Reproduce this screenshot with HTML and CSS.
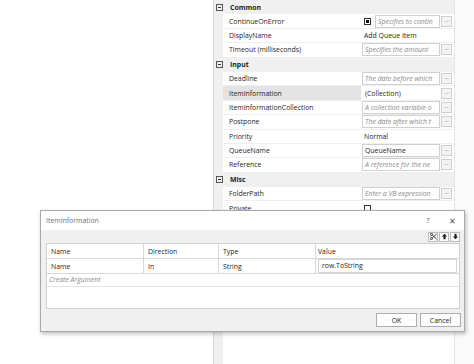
FILE: index.html
```html
<!DOCTYPE html>
<html lang="en">
<head>
    <meta charset="UTF-8">
    <title>Properties - Add Queue Item</title>
    <link rel="stylesheet" href="styles.css">
</head>
<body>
    <div class="screen">
        <div class="canvas"></div>
        <div class="panel">
            <div class="category"><span class="toggle"></span>Common</div>
            <div class="prop">
                <div class="name">ContinueOnError</div>
                <div class="value"><span class="check checked"></span><span class="box hint">Specifies to contin</span><span class="dots">...</span></div>
            </div>
            <div class="prop">
                <div class="name">DisplayName</div>
                <div class="value plain">Add Queue Item</div>
            </div>
            <div class="prop">
                <div class="name">Timeout (milliseconds)</div>
                <div class="value"><span class="box hint">Specifies the amount</span><span class="dots">...</span></div>
            </div>
            <div class="category"><span class="toggle"></span>Input</div>
            <div class="prop">
                <div class="name">Deadline</div>
                <div class="value"><span class="box hint">The date before which</span><span class="dots">...</span></div>
            </div>
            <div class="prop selected">
                <div class="name">ItemInformation</div>
                <div class="value"><span class="box flat">(Collection)</span><span class="dots">...</span></div>
            </div>
            <div class="prop">
                <div class="name">ItemInformationCollection</div>
                <div class="value"><span class="box hint">A collection variable o</span><span class="dots">...</span></div>
            </div>
            <div class="prop">
                <div class="name">Postpone</div>
                <div class="value"><span class="box hint">The date after which t</span><span class="dots">...</span></div>
            </div>
            <div class="prop">
                <div class="name">Priority</div>
                <div class="value plain">Normal</div>
            </div>
            <div class="prop">
                <div class="name">QueueName</div>
                <div class="value"><span class="box">QueueName</span><span class="dots">...</span></div>
            </div>
            <div class="prop">
                <div class="name">Reference</div>
                <div class="value"><span class="box hint">A reference for the ne</span><span class="dots">...</span></div>
            </div>
            <div class="category"><span class="toggle"></span>Misc</div>
            <div class="prop">
                <div class="name">FolderPath</div>
                <div class="value"><span class="box hint">Enter a VB expression</span><span class="dots">...</span></div>
            </div>
            <div class="prop">
                <div class="name">Private</div>
                <div class="value"><span class="check"></span></div>
            </div>
        </div>
        <div class="side"></div>

        <div class="dialog">
            <div class="dialog-title">
                <span class="title-text">ItemInformation</span>
                <span class="title-btn">?</span>
                <span class="title-btn close">&#x2715;</span>
            </div>
            <div class="dialog-body">
                <div class="toolbar">
                    <span class="tool">
                        <svg width="7" height="7" viewBox="0 0 8 8"><circle cx="1.6" cy="1.6" r="1.2" fill="none" stroke="#222" stroke-width="1"/><circle cx="1.6" cy="6.4" r="1.2" fill="none" stroke="#222" stroke-width="1"/><path d="M2.6 2.4L7.5 6.8M2.6 5.6L7.5 1.2" stroke="#222" stroke-width="1"/></svg>
                    </span>
                    <span class="tool">
                        <svg width="7" height="7" viewBox="0 0 8 8"><path d="M4 0.8L7 4H5.2V7.2H2.8V4H1Z" fill="#222"/></svg>
                    </span>
                    <span class="tool">
                        <svg width="7" height="7" viewBox="0 0 8 8"><path d="M4 7.2L7 4H5.2V0.8H2.8V4H1Z" fill="#222"/></svg>
                    </span>
                </div>
                <div class="grid">
                    <div class="grid-row head">
                        <div class="cell c-name">Name</div>
                        <div class="cell c-dir">Direction</div>
                        <div class="cell c-type">Type</div>
                        <div class="cell c-value">Value</div>
                    </div>
                    <div class="grid-row">
                        <div class="cell c-name">Name</div>
                        <div class="cell c-dir">In</div>
                        <div class="cell c-type">String</div>
                        <div class="cell c-value"><span class="value-box">row.ToString</span></div>
                    </div>
                    <div class="create">Create Argument</div>
                </div>
            </div>
            <div class="dialog-footer">
                <button class="btn">OK</button>
                <button class="btn">Cancel</button>
            </div>
        </div>
    </div>
</body>
</html>
```

FILE: styles.css
```css
body {
    margin: 0;
    font-family: "Open Sans", "Noto Sans", sans-serif;
    font-size: 6.9px;
    color: #1e1e1e;
    background: #fff;
}

.screen {
    position: relative;
    width: 474px;
    height: 364px;
    overflow: hidden;
    display: flex;
}

.canvas {
    width: 213px;
    background: #fff;
}

.panel {
    width: 240px;
    height: 364px;
    background: #fff;
    border-left: 1px solid #dcdcdc;
    box-shadow: inset 9px 0 0 #f0f0f0;
    overflow: hidden;
}

.side {
    flex: 1;
    background: #fafafa;
    border-left: 1px solid #e4e4e4;
}

/* property grid */
.category {
    height: 14.4px;
    display: flex;
    align-items: center;
    background: #f0f0f0;
    font-weight: bold;
    box-sizing: border-box;
}

.toggle {
    width: 5px;
    height: 5px;
    border: 1px solid #555;
    margin: 0 7px 0 2px;
    position: relative;
}

.toggle::after {
    content: "";
    position: absolute;
    left: 1px;
    right: 1px;
    top: 2px;
    height: 1px;
    background: #333;
}

.prop {
    height: 14.4px;
    display: flex;
    margin-left: 9px;
    box-sizing: border-box;
}

.prop .name {
    width: 138px;
    padding-left: 6px;
    display: flex;
    align-items: center;
    border-bottom: 1px solid #efefef;
    box-sizing: border-box;
}

.prop.selected .name {
    background: #e3e3e3;
}

.prop .value {
    flex: 1;
    display: flex;
    align-items: center;
    gap: 1px;
    padding: 0 2px 0 1px;
    border-bottom: 1px solid #efefef;
    min-width: 0;
}

.prop .value.plain {
    padding-left: 3px;
}

.box {
    flex: 1;
    width: 0;
    min-width: 0;
    height: 11px;
    line-height: 11px;
    border: 1px solid #d0d0d0;
    background: #fff;
    padding-left: 2px;
    white-space: nowrap;
    overflow: hidden;
}

.box.flat {
    border-color: transparent;
}

.hint {
    color: #8a8a8a;
    font-style: italic;
}

.dots {
    flex: none;
    width: 9px;
    height: 9px;
    line-height: 7px;
    overflow: hidden;
    border: 1px solid #cfcfcf;
    background: #f4f4f4;
    text-align: center;
    color: #555;
    font-size: 5.5px;
}

.check {
    width: 7px;
    height: 7px;
    border: 1px solid #333;
    background: #fff;
    margin: 0 3px 0 2px;
    box-sizing: border-box;
    flex: none;
}

.check.checked {
    border-color: #333;
    background: #111;
    box-shadow: inset 0 0 0 1px #fff;
}

/* dialog */
.dialog {
    position: absolute;
    left: 40px;
    top: 210px;
    width: 423px;
    border: 1px solid #a8a8a8;
    background: #f0f0f0;
    box-shadow: 1px 2px 4px rgba(0, 0, 0, 0.25);
}

.dialog-title {
    height: 19px;
    background: #fff;
    display: flex;
    align-items: center;
    padding-left: 5px;
}

.title-text {
    flex: 1;
    color: #707070;
}

.title-btn {
    width: 24px;
    text-align: center;
    color: #555;
    font-size: 7px;
}

.title-btn.close {
    font-size: 8px;
    margin-right: 0;
}

.dialog-body {
    padding: 0 4px 0 5px;
}

.toolbar {
    height: 13px;
    display: flex;
    justify-content: flex-end;
    align-items: center;
    gap: 1px;
}

.tool {
    width: 8px;
    height: 8px;
    border: 1px solid #bbb;
    background: #fafafa;
    display: flex;
    align-items: center;
    justify-content: center;
}

.grid {
    height: 64px;
    background: #fff;
    border: 1px solid #cfcfcf;
}

.grid-row {
    display: flex;
    height: 15px;
    border-bottom: 1px solid #d8d8d8;
    box-sizing: border-box;
}

.cell {
    display: flex;
    align-items: center;
    padding-left: 4px;
    border-right: 1px solid #d8d8d8;
    box-sizing: border-box;
}

.c-name { width: 97px; }
.c-dir { width: 75px; }
.c-type { width: 97px; }
.c-value { flex: 1; border-right: none; padding: 0 2px; }

.value-box {
    flex: 1;
    height: 12px;
    line-height: 12px;
    border: 1px solid #d4d4d4;
    padding-left: 3px;
}

.create {
    height: 12px;
    line-height: 12px;
    padding-left: 2px;
    color: #8a8a8a;
    font-style: italic;
    border-bottom: 1px solid #e4e4e4;
}

.dialog-footer {
    height: 22px;
    display: flex;
    justify-content: flex-end;
    align-items: center;
    gap: 3px;
    padding-right: 3px;
}

.btn {
    width: 41px;
    height: 14px;
    padding: 0;
    font-family: inherit;
    font-size: 6.9px;
    color: #1e1e1e;
    background: #fdfdfd;
    border: 1px solid #adadad;
}
```
